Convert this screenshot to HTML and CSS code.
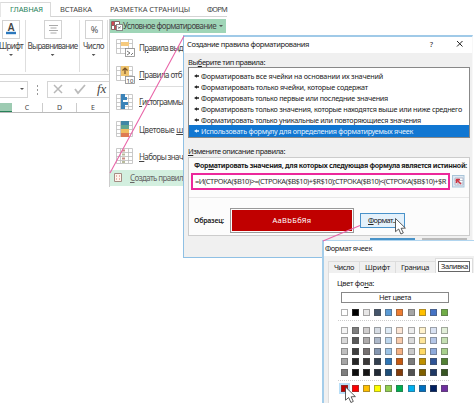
FILE: index.html
```
<!DOCTYPE html>
<html lang="ru">
<head>
<meta charset="utf-8">
<title>Создание правила форматирования</title>
<link rel="stylesheet" href="styles.css">
</head>
<body>
<main class="desktop">
  <section class="excel">
    <nav class="tabs">
      <div class="tab active"><span data-w="33">ГЛАВНАЯ</span></div>
      <div class="tab t2"><span data-w="32">ВСТАВКА</span></div>
      <div class="tab t3"><span data-w="80">РАЗМЕТКА СТРАНИЦЫ</span></div>
      <div class="tab t4"><span data-w="20">ФОРМ</span></div>
    </nav>
    <div class="ribbon">
      <div class="group g1">
        <div class="tool"><svg width="18" height="19"><text x="9" y="11" text-anchor="middle" font-size="10" font-weight="600" fill="#444">A</text><path d="M4 13h10" stroke="#2b78bd" stroke-width="2.4"/></svg></div>
        <span data-w="24">Шрифт</span><i class="caret"></i>
      </div>
      <div class="group g2">
        <div class="tool"><svg width="18" height="19"><path d="M5 5.500h9M6.500 8h6M5 10.500h9M6.500 13h6" stroke="#aaa"/></svg></div>
        <span data-w="50">Выравнивание</span><i class="caret"></i>
      </div>
      <div class="group g3">
        <div class="tool"><svg width="18" height="19"><text x="9.500" y="13" text-anchor="middle" font-size="9" fill="#555">%</text></svg></div>
        <span data-w="21">Число</span><i class="caret"></i>
      </div>
    </div>
    <div class="formula">
      <div class="namebox"><i class="caret"></i></div>
      <svg class="dots" width="19" height="17"><path d="M9.500 4v2M9.500 8v2M9.500 12v2" stroke="#999"/></svg>
      <div class="fxbox"><svg width="62" height="17"><path d="M7 4l8 8M15 4l-8 8" stroke="#b8b8b8" stroke-width="1.500"/><path d="M28 8l3 4 7-8" fill="none" stroke="#bbb" stroke-width="1.800"/><text x="50" y="12" class="fx">fx</text></svg></div>
    </div>
    <div class="cols"><b></b><span class="cc">C</span><span>D</span><span class="ce">E</span></div>
  </section>

  <section class="menu">
    <header>
      <svg width="12" height="12"><path d="M.5 1.500h8v8h-8zM3.500 1.500v8M.5 5.500h8" fill="#fff" stroke="#8a6464"/><path d="M1 2h2v3H1zM4 6h2v3H4z" fill="#d44853"/><rect x="5.500" y="4.500" width="6" height="6" fill="#fff" stroke="#888"/><path d="M7 8.500l3-2M7 6.500l2 2" stroke="#555" stroke-width=".7"/></svg>
      <span data-w="93">Условное форматирование</span><i class="caret"></i>
    </header>
    <div class="item"><svg class="grid" width="19" height="19"><path d="M.5 1.500h16v14H.5zM4.500 1.500v14M12.500 1.500v14M.5 5.500h16M.5 10.500h16" class="cells"/><path d="M5 4h8v4H5z" fill="#f6ca7d"/><rect x="9.500" y="10.500" width="9" height="8" class="badge"/><path d="M11 13l3 2-3 2M15 17l2-2" class="ink"/></svg><span data-w="44">П<u>р</u>авила выд</span></div>
    <div class="item sep"><svg class="grid" width="19" height="19"><path d="M.5 1.500h16v14H.5zM4.500 1.500v14M12.500 1.500v14M.5 5.500h16M.5 10.500h16" class="cells"/><path d="M5 1h8v10H5z" fill="#efc46f"/><path d="M9 9V3M6.500 5.500L9 3l2.500 2.500" class="arrow"/><rect x="9.500" y="11.500" width="9" height="7" class="badge"/><text x="10.500" y="17.500" font-size="6" fill="#333">10</text></svg><span data-w="43"><u>П</u>равила отб</span></div>
    <div class="item"><svg class="grid" width="19" height="19"><path d="M.5 1.500h16v15H.5zM4.500 1.500v15M12.500 1.500v15M.5 5.500h16M.5 9.500h16M.5 13.500h16" class="cells"/><path d="M5 1h4v3h2v3H7v2h5v3H9v4H5z" fill="#3b83b8"/></svg><span data-w="44"><u>Г</u>истограммы</span></div>
    <div class="item"><svg class="grid" width="19" height="19"><path d="M.5 1.500h16v15H.5zM4.500 1.500v15M12.500 1.500v15M.5 5.500h16M.5 9.500h16M.5 13.500h16" class="cells"/><path d="M5 1h8v4H5z" fill="#3f86a5"/><path d="M5 5h8v4H5z" fill="#62a68f"/><path d="M5 9h8v4H5z" fill="#f0bd62"/><path d="M5 13h8v4H5z" fill="#de7b54"/></svg><span data-w="44">Цветовые <u>ш</u></span></div>
    <div class="item"><svg class="grid" width="19" height="19"><path d="M.5 1.500h16v15H.5zM4.500 1.500v15M12.500 1.500v15M.5 5.500h16M.5 9.500h16M.5 13.500h16" class="cells"/><path d="M6 3.500h3M6 11.500h3" stroke="#c98c82" stroke-width="2"/><path d="M6 7.500h3M6 15h3" stroke="#b8bb9b" stroke-width="2"/></svg><span data-w="44"><u>Н</u>аборы знач</span></div>
    <footer><svg width="9" height="10"><path d="M.5.5h7v8h-7z" fill="#fff4ec" stroke="#a38d84"/><path d="M2 3h1M5 3h1M2 6h1M5 6h1" stroke="#d67168"/></svg><span data-w="53"><u>С</u>оздать правил</span></footer>
  </section>

  <section class="rule">
    <header><span data-w="122">Создание правила форматирования</span><b>?</b><svg width="8" height="8"><path d="M1 1l5.500 5.500M6.500 1L1 6.500" stroke="#222"/></svg></header>
    <p class="choose"><span data-w="77">Вы<u>б</u>ерите тип правила:</span></p>
    <ul>
      <li><svg class="pointer" viewBox="0 0 5 4"><path d="M0 2L3 .3v1h2v1.400H3v1z"/></svg><span data-w="182">Форматировать все ячейки на основании их значений</span></li>
      <li><svg class="pointer" viewBox="0 0 5 4"><path d="M0 2L3 .3v1h2v1.400H3v1z"/></svg><span data-w="167">Форматировать только ячейки, которые содержат</span></li>
      <li><svg class="pointer" viewBox="0 0 5 4"><path d="M0 2L3 .3v1h2v1.400H3v1z"/></svg><span data-w="187">Форматировать только первые или последние значения</span></li>
      <li><svg class="pointer" viewBox="0 0 5 4"><path d="M0 2L3 .3v1h2v1.400H3v1z"/></svg><span data-w="261">Форматировать только значения, которые находятся выше или ниже среднего</span></li>
      <li><svg class="pointer" viewBox="0 0 5 4"><path d="M0 2L3 .3v1h2v1.400H3v1z"/></svg><span data-w="220">Форматировать только уникальные или повторяющиеся значения</span></li>
      <li class="selected"><svg class="pointer" viewBox="0 0 5 4"><path d="M0 2L3 .3v1h2v1.400H3v1z"/></svg><span data-w="212">Использовать формулу для определения форматируемых ячеек</span></li>
    </ul>
    <p class="edit"><span data-w="97"><u>И</u>змените описание правила:</span></p>
    <div class="description">
      <strong><span data-w="273">Фор<u>м</u>атировать значения, для которых следующая формула является истинной:</span></strong>
      <div class="entry">
        <div class="expr"><span data-w="251">=И(СТРОКА($B10)&gt;=(СТРОКА($B$10)+$R$10);СТРОКА($B10)&lt;(СТРОКА($B$10)+$R</span></div>
        <svg width="13" height="13"><rect x=".5" y=".5" width="11.500" height="11.500" fill="#dfe9f3" stroke="#a9c5d9"/><path d="M3 3h8v7H3zM3 5.500h8M3 8h8M6 3v7" fill="#fff" stroke="#9fa8bb" stroke-width=".7"/><path d="M4.500 4.500l4.500 4.500M4.500 8V4.500H8" fill="none" stroke="#cf3341" stroke-width="1.500"/></svg>
      </div>
      <div class="sample"><b><span data-w="30">Образец:</span></b><div class="preview"><div><span data-w="39">AaBbБбЯя</span></div></div><button><span data-w="29"><u>Ф</u>ормат...</span></button></div>
    </div>
    <div class="actions"><i></i><i></i></div>
  </section>

  <section class="cells-dialog">
    <header><span data-w="47">Формат ячеек</span></header>
    <nav><div class="n1"><span data-w="20">Число</span></div><div class="n2"><span data-w="25">Шрифт</span></div><div class="n3"><span data-w="28">Граница</span></div><div class="current"><em><span data-w="27">Заливка</span></em></div></nav>
    <div class="fill">
      <p><span data-w="37">Цвет фо<u>н</u>а:</span></p>
      <div class="none"><span data-w="32">Нет цвета</span></div>
      <div class="swatches base" data-colors="ffffff 000000 e7e6e6 44546a 5b9bd5 ed7d31 a5a5a5 ffc000 4472c4 70ad47"></div>
      <div class="tints">
        <div class="swatches" data-colors="f4f4f4 7f7f7f d0cece d6dce4 deebf6 fbe5d5 ededed fff2cc d9e2f3 e2efd9"></div>
        <div class="swatches" data-colors="d8d8d8 595959 aeabab adb9ca bdd7ee f7cbac dbdbdb fee599 b4c6e7 c5e0b3"></div>
        <div class="swatches" data-colors="bfbfbf 3f3f3f 757070 8496b0 9cc3e5 f4b183 c9c9c9 ffd965 8eaadb a8d08d"></div>
        <div class="swatches" data-colors="a5a5a5 262626 3a3838 323f4f 2e75b5 c55a11 7b7b7b bf9000 2f5496 538135"></div>
        <div class="swatches" data-colors="7f7f7f 0c0c0c 171616 222a35 1e4e79 833c0b 525252 7f6000 1f3864 375623"></div>
      </div>
      <div class="swatches standard" data-colors="c00000 ff0000 ffc000 ffff00 92d050 00b050 00b0f0 0070c0 002060 7030a0"></div>
    </div>
  </section>

  <svg class="guide" width="474" height="403">
    <path d="M110 173L184 36M360 225.500L323 241" class="pink"/>
    <path d="M395.500 218.500v13.200l3.200-2.700 2.200 5 2.400-1.100-2.200-4.600 4.300-.2z" class="mouse"/>
    <path d="M345.500 387v13.200l3.200-2.700 2.200 5 2.400-1.100-2.200-4.600 4.300-.2z" class="mouse"/>
  </svg>
</main>
<script src="script.js"></script>
</body>
</html>
```
FILE: styles.css
```
* { box-sizing: border-box; }
body { margin: 0; background: #fff; }
p, ul { margin: 0; padding: 0; list-style: none; }
.desktop { position: relative; width: 474px; height: 403px; overflow: hidden; font: 7.5px/10px "Noto Sans", "Open Sans", sans-serif; color: #444; }
span { white-space: nowrap; }
svg { flex: none; }
span[data-w] { display: inline-block; flex: none; }
u { text-decoration-thickness: .6px; text-underline-offset: 1px; }
.caret { display: block; width: 4px; height: 2px; background: #555; clip-path: polygon(0 0, 100% 0, 50% 100%); flex: none; }

.excel { width: 227px; }
.tabs { display: flex; height: 17px; padding-top: 2px; }
.tab { flex: none; border-bottom: 1px solid #d4d4d4; padding-top: 2px; height: 15px; }
.tab.active { width: 51px; padding-left: 9px; border: 1px solid #dadada; border-bottom: 0; border-left-color: #e6e6e6; color: #27825a; padding-top: 1px; }
.t2 { width: 59px; padding-left: 9px; }
.t3 { width: 97px; }
.t4 { width: 20px; }
.ribbon { display: flex; width: 109px; height: 58px; border-bottom: 1px solid #d2d2d2; padding-top: 3px; }
.group { flex: none; height: 52px; display: flex; flex-direction: column; align-items: center; border-right: 1px solid #dedede; font-size: 8px; }
.g1 { width: 26px; padding-right: 3px; }
.g2 { width: 54px; }
.g3 { width: 28px; }
.tool { width: 18px; height: 19px; border: 1px solid #d2d2d2; margin-bottom: 2px; }
.tool svg { display: block; margin: -1px; }
.group .caret { margin-top: 3px; }
.formula { display: flex; margin-top: 6px; height: 17px; }
.namebox { width: 28px; border: 1px solid #d5d5d5; border-left: 0; padding: 6px 0 0 20px; }
.fxbox { width: 62px; border: 1px solid #d5d5d5; border-right: 0; }
.fxbox svg { display: block; margin: -1px; }
.fx { font: italic 13px "Liberation Serif", serif; fill: #444; }
.cols { display: flex; height: 10px; margin-top: 5px; width: 109px; border-bottom: 1px solid #bbb; line-height: 9px; font-size: 7px; }
.cols b { width: 12px; background: #9dcbb2; border-bottom: 1px solid #278158; }
.cols span { width: 34px; text-align: center; border-right: 1px solid #ccc; }
.cols .cc { width: 31px; }
.cols .ce { width: 32px; border: 0; }

.menu { position: absolute; left: 109px; top: 19px; width: 117px; height: 168px; border-left: 1px solid #ccc; background: #fff; font-size: 8px; }
.menu header { height: 14px; display: flex; align-items: center; background: #9fd5b7; padding-left: 1px; }
.menu header .caret { margin-left: 3px; }
.item { height: 27px; display: flex; align-items: center; padding: 2px 0 0 6px; }
.item:nth-of-type(3) { height: 28px; }
.item svg { margin-right: 4px; }
.sep { background: linear-gradient(#ddd, #ddd) 29px 100% / 44px 1px no-repeat; }
.cells { fill: #fff; stroke: #bdbdbd; stroke-width: .8; }
.badge { fill: #fff; stroke: #888; stroke-width: .8; }
.ink { fill: none; stroke: #555; stroke-width: .8; }
.arrow { fill: none; stroke: #765127; stroke-width: 1.200; }
.menu footer { height: 16px; width: 74px; margin-top: 1px; background: #d3efdf; display: flex; align-items: center; padding-left: 4px; }
.menu footer span { margin-left: 7px; color: #666; }

.guide { position: absolute; left: 0; top: 0; pointer-events: none; }
.pink { stroke: #e966a9; stroke-width: 1.100; }
.mouse { fill: #fff; stroke: #333; stroke-width: .8; }

.rule { position: absolute; left: 183px; top: 35px; width: 290px; height: 223px; background: #f0f0f0; border: 1px solid #8fc0e4; border-top: 2px solid #a0cae8; border-right: 1px solid #f8f8f8; color: #222; padding-left: 4px; }
.rule header { height: 16px; margin-left: -4px; padding: 0 8px 2px 3px; background: #fff; display: flex; align-items: center; }
.rule header b { font-weight: 400; margin-left: auto; margin-right: 23px; }
.choose { height: 14px; padding-top: 4px; }
.rule ul { width: 282px; height: 71px; border: 1px solid #888; background: #fff; padding-top: 2px; }
.rule li { height: 11px; display: flex; align-items: center; padding-left: 5px; font-size: 7.2px; }
.pointer { width: 5px; height: 4px; margin-right: 2px; fill: currentColor; }
.rule .selected { height: 12px; background: #1177d2; color: #e7f4ff; }
.edit { height: 19px; padding-top: 8px; }
.description { width: 282px; height: 79px; border: 1px solid #ccc; background: #fcfcfc; }
.description strong { display: block; height: 14px; padding: 3px 0 0 5px; font-size: 7px; font-weight: 700; }
.entry { display: flex; align-items: center; height: 18px; padding-left: 2px; }
.expr { width: 259px; height: 17px; border: 2px solid #ec289b; background: #fff; padding: 1px 0 0 2px; color: #333; }
.entry svg { margin-left: 2px; }
.sample { height: 36px; border-top: 1px solid #e8e8e8; margin-top: 7px; display: flex; align-items: center; padding: 10px 0 0 5px; }
.sample b { width: 36px; font-size: 7px; font-weight: 600; }
.preview { width: 124px; height: 25px; border: 1px solid #999; padding: 1px; }
.preview div { height: 21px; background: #c00000; color: #fff; text-align: center; padding-top: 5px; }
.sample button { font: inherit; width: 45px; height: 15px; margin-left: 6px; padding: 0; border: 1px solid #4992ca; background: #e4f1fb; color: #222; line-height: 11px; }
.actions { display: flex; gap: 7px; padding: 2px 0 0 182px; }
.actions i { width: 45px; height: 2px; background: #4993c8; }
.actions i + i { background: #bbb; }

.cells-dialog { position: absolute; left: 322px; top: 240px; width: 153px; height: 164px; border-top: 1px solid #b1d5ef; border-left: 2px solid #a4cdea; background: #f0f0f0; color: #222; }
.cells-dialog header { height: 15px; background: #fff; padding: 2px 0 0 1px; }
.cells-dialog nav { height: 17px; padding: 5px 0 0 4px; display: flex; }
.cells-dialog nav div { height: 12px; border: 1px solid #ddd; border-bottom: 0; padding-left: 5px; border-right: 0; }
.n1 { width: 31px; }
.n2 { width: 36px; }
.n3 { width: 40px; }
.cells-dialog nav .current { background: #fff; width: 38px; height: 15px; margin-top: -3px; border: 1px solid #ddd; border-bottom: 0; padding: 2px 0 0 2px; }
.current em { display: block; width: 32px; height: 11px; border: 1px solid #666; font-style: normal; line-height: 9px; padding-left: 2px; }
.fill { background: #fff; border-left: 1px solid #ddd; height: 131px; margin-left: 4px; padding: 5px 0 0 12px; }
.fill p { margin-left: -4px; height: 14px; }
.none { width: 108px; height: 11px; border: 1px solid #888; text-align: center; line-height: 9px; }
.swatches { display: grid; grid-template-columns: repeat(10, 7px); column-gap: 4.100px; height: 7px; }
.swatches i { background: var(--color); border: .5px solid rgba(80, 80, 80, .45); }
.base { margin-top: 6px; }
.tints { width: 111px; margin: 4px 0 0 -3px; padding: 6px 0 4px 3px; border-top: 1px dotted #ccc; border-bottom: 1px dotted #ccc; display: grid; gap: 3.400px; }
.standard { margin-top: 4px; }
.standard i:first-child { outline: 2px solid #b9dff8; }
```
FILE: script.js
```
// Fill the palette rows and track each label to its designed width.
document.querySelectorAll('[data-colors]').forEach(row => {
  row.dataset.colors.split(' ').forEach(color => {
    const cell = document.createElement('i');
    cell.style.setProperty('--color', '#' + color);
    row.append(cell);
  });
});
document.querySelectorAll('[data-w]').forEach(label => {
  const width = label.getBoundingClientRect().width;
  label.style.letterSpacing = (label.dataset.w - width) / label.textContent.length + 'px';
});
```
